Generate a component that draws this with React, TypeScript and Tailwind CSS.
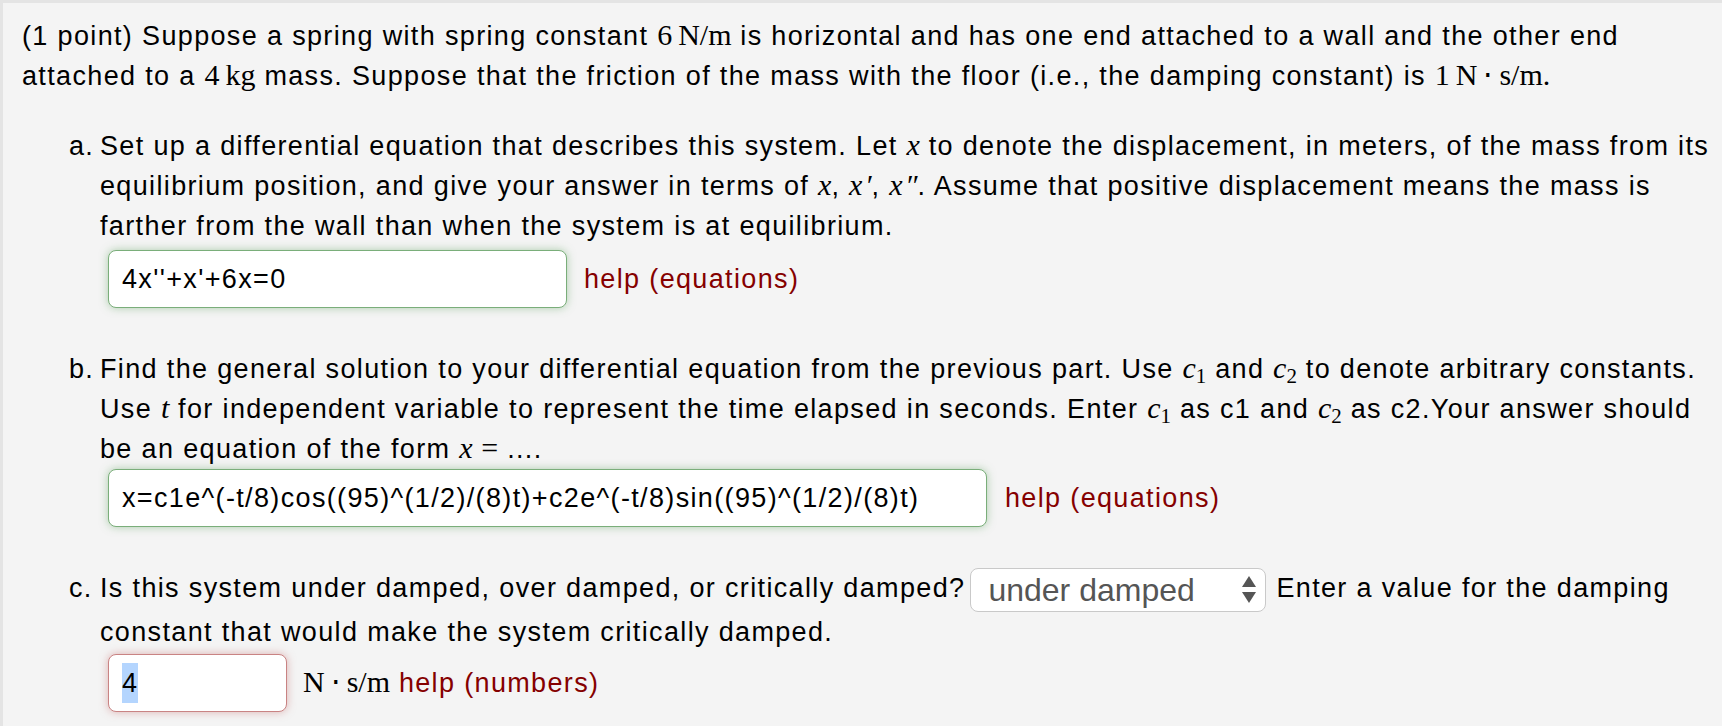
import React from 'react';

// math bits are set in a serif face, like the MathJax output in the page
const Mth = ({ children }: { children: React.ReactNode }) => (
    <span className="font-['Liberation_Serif',serif] text-[30px] leading-none tracking-normal">{children}</span>
);

const Var = ({ children }: { children: React.ReactNode }) => (
    <span className="font-['Liberation_Serif',serif] text-[30px] italic leading-none tracking-normal">{children}</span>
);

const C = ({ n }: { n: string }) => (
    <span className="font-['Liberation_Serif',serif] text-[30px] leading-none tracking-normal">
        <span className="italic">c</span>
        <sub className="text-[21px]">{n}</sub>
    </span>
);

const Help = ({ label }: { label: string }) => (
    <a className="cursor-pointer text-[#850000]">help ({label})</a>
);

export default function App() {
    return (
        <div className="min-h-screen border-l-[3px] border-t-[3px] border-[#e4e4e4] bg-[#f4f4f4] pl-[19px] pr-[6px] pt-[13px] font-['Liberation_Sans',Arial,sans-serif] text-[27px] leading-[40px] tracking-[0.05em] text-black">
            {/* Problem statement */}
            <p>
                (1 point) Suppose a spring with spring constant <Mth>6&#8201;N/m</Mth> is horizontal and has one end attached to a
                wall and the other end attached to a <Mth>4&#8201;kg</Mth> mass. Suppose that the friction of the mass with the
                floor (i.e., the damping constant) is <Mth>1&#8201;N&#8201;&#8901;&#8201;s/m.</Mth>
            </p>

            <ol className="mt-[30px] pl-[47px]">
                {/* Part a */}
                <li className="flex items-baseline">
                    <span className="w-[31px] shrink-0">a.</span>
                    <div className="min-w-0 flex-1">
                        <p>
                            Set up a differential equation that describes this system. Let <Var>x</Var> to denote the
                            displacement, in meters, of the mass from its equilibrium position, and give your answer in terms
                            of <Var>x</Var>, <Var>x&#8202;&#8242;</Var>, <Var>x&#8202;&#8243;</Var>. Assume that positive displacement
                            means the mass is farther from the wall than when the system is at equilibrium.
                        </p>
                        <div className="ml-2 mt-1 flex items-center">
                            <div className="flex h-[58px] w-[459px] items-center rounded-lg border border-[#7aae7a] bg-white pl-[13px] shadow-[0_0_8px_rgba(100,165,100,0.5)]">
                                4x''+x'+6x=0
                            </div>
                            <span className="ml-[17px]">
                                <Help label="equations" />
                            </span>
                        </div>
                    </div>
                </li>

                {/* Part b */}
                <li className="mt-[41px] flex items-baseline">
                    <span className="w-[31px] shrink-0">b.</span>
                    <div className="min-w-0 flex-1">
                        <p>
                            Find the general solution to your differential equation from the previous part. Use <C n="1" /> and{' '}
                            <C n="2" /> to denote arbitrary constants. Use <Var>t</Var> for independent variable to represent the
                            time elapsed in seconds. Enter <C n="1" /> as c1 and <C n="2" /> as c2.Your answer should be an
                            equation of the form <Var>x</Var> <Mth>=</Mth> ....
                        </p>
                        <div className="ml-2 flex items-center">
                            <div className="flex h-[58px] w-[879px] items-center rounded-lg border border-[#7aae7a] bg-white pl-[13px] shadow-[0_0_8px_rgba(100,165,100,0.5)]">
                                x=c1e^(-t/8)cos((95)^(1/2)/(8)t)+c2e^(-t/8)sin((95)^(1/2)/(8)t)
                            </div>
                            <span className="ml-[18px]">
                                <Help label="equations" />
                            </span>
                        </div>
                    </div>
                </li>

                {/* Part c */}
                <li className="mt-[41px] flex items-baseline">
                    <span className="w-[31px] shrink-0">c.</span>
                    <div className="min-w-0 flex-1">
                        <p>
                            Is this system under damped, over damped, or critically damped?
                            <span className="ml-[5px] mr-[10px] inline-flex h-[44px] w-[296px] items-center justify-between rounded-lg border border-[#c9c9c9] bg-white pl-[17px] pr-[8px] align-middle text-[32px] leading-none tracking-normal text-[#555]">
                                <span>under damped</span>
                                <svg width="16" height="28" viewBox="0 0 16 28" className="fill-[#555]">
                                    <polygon points="8,0 15,11 1,11" />
                                    <polygon points="1,16 15,16 8,27" />
                                </svg>
                            </span>
                            Enter a value for the damping constant that would make the system critically damped.
                        </p>
                        <div className="ml-2 mt-[2px] flex items-center">
                            <div className="flex h-[58px] w-[179px] items-center rounded-lg border border-[#c98383] bg-white pl-[13px] shadow-[0_0_8px_rgba(200,110,110,0.5)]">
                                <span className="bg-[#b4d5fe]">4</span>
                            </div>
                            <span className="ml-[16px]">
                                <Mth>N&#8201;&#8901;&#8201;s/m</Mth> <Help label="numbers" />
                            </span>
                        </div>
                    </div>
                </li>
            </ol>
        </div>
    );
}
